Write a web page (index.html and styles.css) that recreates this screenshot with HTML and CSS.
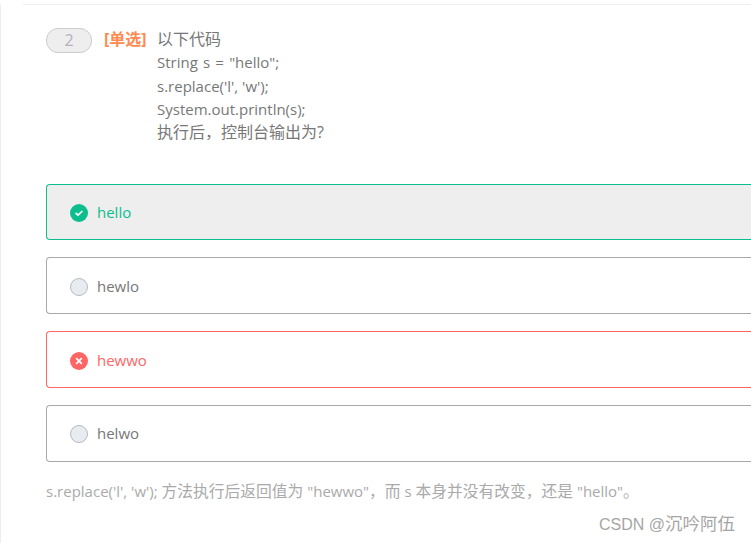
FILE: index.html
```html
<!DOCTYPE html>
<html lang="zh-CN">
<head>
  <meta charset="UTF-8">
  <meta name="viewport" content="width=device-width, initial-scale=1.0">
  <title>单选题</title>
  <link rel="stylesheet" href="styles.css">
</head>
<body>
  <div class="page">
    <div class="question-card">
      <!-- 题干 -->
      <div class="question">
        <span class="question-no">2</span>
        <span class="question-type">[单选]</span>
        <div class="question-text">
          <div class="zh">以下代码</div>
          <div class="code-line">String s = "hello";</div>
          <div>s.replace('l', 'w');</div>
          <div>System.out.println(s);</div>
          <div class="zh">执行后，控制台输出为?</div>
        </div>
      </div>

      <!-- 选项 -->
      <ul class="options">
        <li class="option option-right">
          <svg class="option-icon" viewBox="0 0 18 18">
            <circle cx="9" cy="9" r="9" fill="#0cbd8e"/>
            <path d="M5.6 9 8 11.2 12.4 7" fill="none" stroke="#fff" stroke-width="1.7"/>
          </svg>
          <span>hello</span>
        </li>
        <li class="option">
          <span class="option-radio"></span>
          <span>hewlo</span>
        </li>
        <li class="option option-wrong">
          <svg class="option-icon" viewBox="0 0 18 18">
            <circle cx="9" cy="9" r="9" fill="#ff6565"/>
            <path d="M6.2 6.2 11.8 11.8M11.8 6.2 6.2 11.8" fill="none" stroke="#fff" stroke-width="1.7"/>
          </svg>
          <span>hewwo</span>
        </li>
        <li class="option">
          <span class="option-radio"></span>
          <span>helwo</span>
        </li>
      </ul>

      <!-- 解析 -->
      <p class="analysis">s.replace('l', 'w'); <span class="zh">方法执行后返回值为</span> "hewwo"<span class="zh">，而</span> s <span class="zh">本身并没有改变，还是</span> "hello"<span class="zh">。</span></p>
    </div>
  </div>
  <div class="watermark">CSDN @<span class="watermark-zh">沉吟阿伍</span></div>
</body>
</html>
```

FILE: styles.css
```css
html, body {
  height: 100%;
}

body {
  margin: 0;
  overflow: hidden;
  position: relative;
  background-color: #fff;
  color: #777;
  font-family: "Open Sans", "Noto Sans CJK SC", sans-serif;
  font-size: 15px;
}

.zh {
  font-size: 16px;
}

.page {
  height: 100%;
  border-left: 1px solid #eee;
  padding-left: 22px;
  box-sizing: border-box;
}

.question-card {
  margin-top: 4px;
  border-top: 1px solid #eee;
  padding: 23px 0 0 23px;
}

/* 题干 */
.question {
  display: flex;
  align-items: flex-start;
}

.question-no {
  width: 44px;
  height: 23px;
  border: 1px solid #ccc;
  border-radius: 12px;
  background-color: #eee;
  color: #b5b0bd;
  font-size: 16px;
  line-height: 23px;
  text-align: center;
  flex-shrink: 0;
}

.question-type {
  margin-left: 12px;
  width: 53px;
  color: #ff8a50;
  font-weight: bold;
  font-size: 16px;
  line-height: 23px;
  flex-shrink: 0;
}

.question-text {
  line-height: 23.3px;
}

.code-line {
  word-spacing: 1.3px;
}

/* 选项 */
.options {
  list-style: none;
  margin: 39.3px 0 0;
  padding: 0;
}

.option {
  display: flex;
  align-items: center;
  gap: 9px;
  height: 54.7px;
  margin-bottom: 17px;
  padding-left: 23px;
  border: 1px solid #a8a8a8;
  border-right: 0;
  border-radius: 4px 0 0 4px;
}

.option-icon {
  width: 18px;
  height: 18px;
  margin-top: 2px;
  flex-shrink: 0;
}

.option-radio {
  width: 16px;
  height: 16px;
  margin-top: 2px;
  border: 1px solid #b4bbc3;
  border-radius: 50%;
  background-color: #e8ecf0;
  flex-shrink: 0;
}

.option-right {
  border-color: #0cbd8e;
  background-color: #eee;
  color: #0cbd8e;
}

.option-wrong {
  border-color: #ff6565;
  color: #ff6565;
}

/* 解析 */
.analysis {
  margin: 19.5px 0 0;
  color: #aaa;
  line-height: 21px;
  white-space: nowrap;
}

.analysis .zh {
  font-size: 15.75px;
}

.watermark {
  position: absolute;
  right: 16px;
  bottom: 7px;
  color: #a6a6a6;
  font-family: "Liberation Sans", "Noto Sans CJK SC", sans-serif;
  font-size: 16px;
  line-height: 22px;
}

.watermark-zh {
  font-size: 17.5px;
}
```
